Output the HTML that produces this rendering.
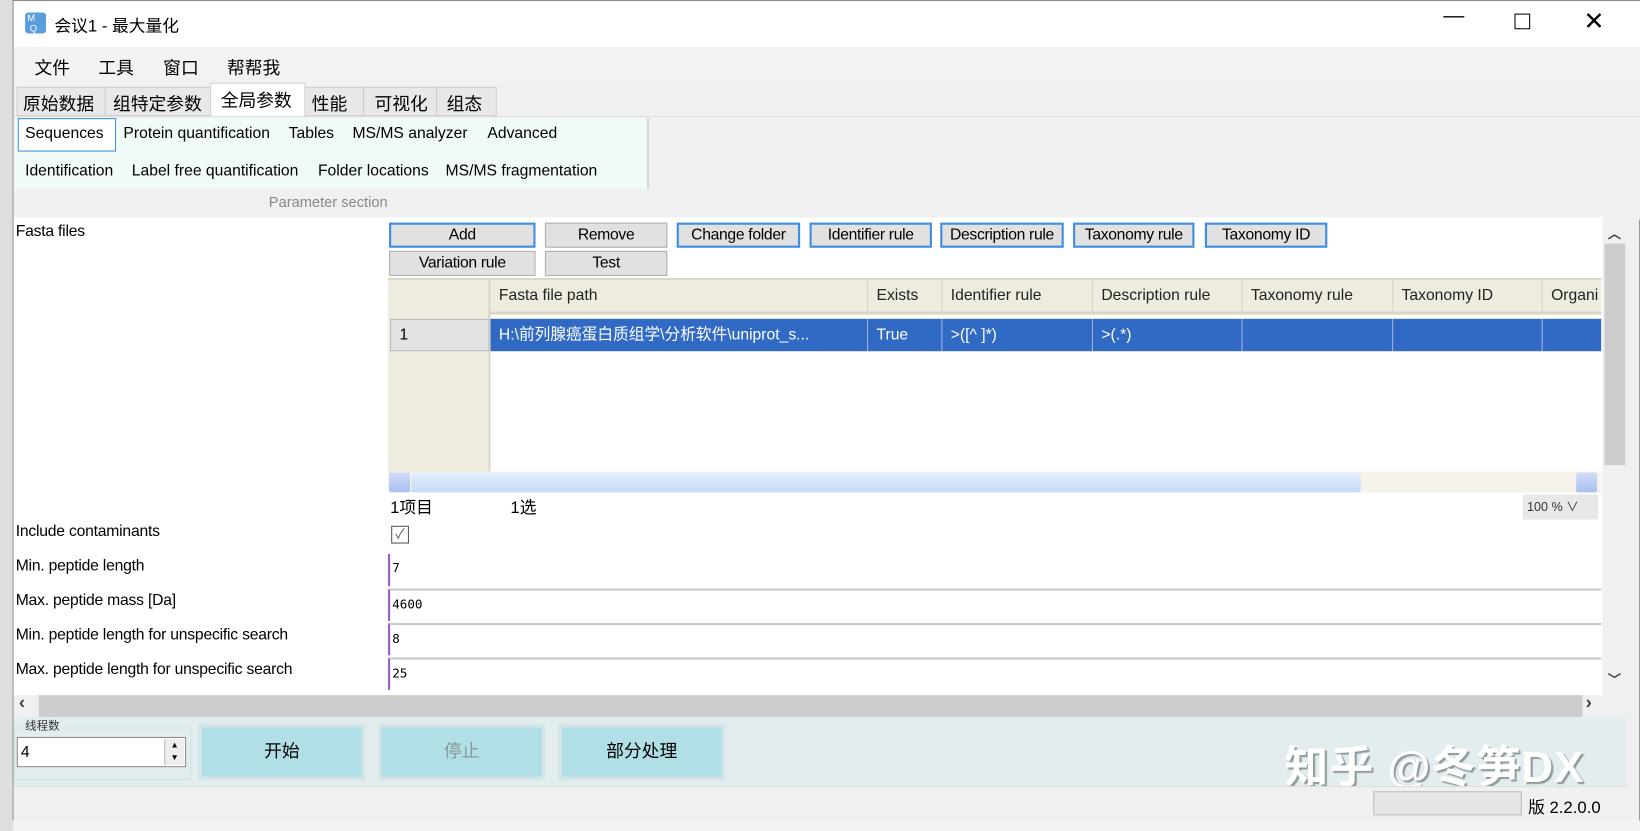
<!DOCTYPE html>
<html><head><meta charset="utf-8"><style>
*{box-sizing:border-box;margin:0;padding:0}
body{width:1640px;height:831px;overflow:hidden;background:#f3f3f3;font-family:"Liberation Sans","Noto Sans CJK SC",sans-serif;color:#000}
#w{position:absolute;left:0;top:0;width:1568px;height:795px;transform:scale(1.04592,1.04528);transform-origin:0 0;background:#ececec}
.a{position:absolute;white-space:nowrap}
.btn{position:absolute;height:24px;background:#e1e1e1;border:1px solid #adadad;font-size:15px;text-align:center;line-height:22px;letter-spacing:-0.3px}
.bb{border:2px solid #3d8ee0;line-height:20px}
.hd{position:absolute;top:0;height:31px;border-right:1px solid #d8d5c4;font-size:15px;line-height:30px;padding-left:8px;color:#222}
.cl{position:absolute;top:0;height:31px;border-right:1px solid #9fb5dd;color:#fff;font-size:15px;line-height:31px;padding-left:8px}
.lab{position:absolute;left:15px;font-size:15px;letter-spacing:-0.2px}
.in{position:absolute;left:371px;width:1160px;height:31px;border-top:2px solid #c8c8c8;border-left:2px solid #9b59d0;font-family:"DejaVu Sans Mono","Liberation Mono",monospace;font-size:12px;padding:6px 0 0 2px}
.gb{position:absolute;top:693px;height:53px;width:159px;background:#b0dfe5;border:3px solid #d3e3e6;font-size:17px;text-align:center;line-height:46px}
</style></head><body><div id="w">
<div class="a" style="left:0;top:0;width:12px;height:795px;background:#dedede"></div>
<div class="a" style="left:12px;top:0;width:1556px;height:785px;background:#fff;border-left:1px solid #8a8a8a;border-top:1px solid #8a8a8a"></div>
<div class="a" style="left:24px;top:12px;width:20px;height:20px;background:#5a9ee0;border-radius:3px;color:#fff;font-size:9px;line-height:10px;padding-left:2px">M<br>&nbsp;Q</div>
<div class="a" style="left:52px;top:11px;font-size:16px">会议1 - 最大量化</div>
<div class="a" style="left:1380px;top:4px;font-size:20px">—</div>
<div class="a" style="left:1448px;top:13px;width:15px;height:15px;border:1.5px solid #000"></div>
<div class="a" style="left:1514px;top:6px;font-size:24px;font-weight:300">✕</div>
<div class="a" style="left:13px;top:45px;width:1555px;height:35px;background:#f2f2f2"></div>
<div class="a" style="left:33px;top:51px;font-size:17px">文件</div>
<div class="a" style="left:94px;top:51px;font-size:17px">工具</div>
<div class="a" style="left:156px;top:51px;font-size:17px">窗口</div>
<div class="a" style="left:217px;top:51px;font-size:17px">帮帮我</div>
<div class="a" style="left:13px;top:80px;width:1555px;height:130px;background:#f0f0f0"></div>
<div class="a" style="left:16px;top:83px;width:459px;height:28px;background:#e8e8e8;border:1px solid #d0d0d0"></div>
<div class="a" style="left:22px;top:85px;font-size:17px">原始数据</div>
<div class="a" style="left:100px;top:83px;height:28px;border-left:1px solid #ccc"></div>
<div class="a" style="left:108px;top:85px;font-size:17px">组特定参数</div>
<div class="a" style="left:201px;top:79px;width:91px;height:33px;background:#fff;border:1px solid #d0d0d0;border-bottom:none"></div>
<div class="a" style="left:211px;top:82px;font-size:17px">全局参数</div>
<div class="a" style="left:298px;top:85px;font-size:17px">性能</div>
<div class="a" style="left:347px;top:83px;height:28px;border-left:1px solid #ccc"></div>
<div class="a" style="left:358px;top:85px;font-size:17px">可视化</div>
<div class="a" style="left:417px;top:83px;height:28px;border-left:1px solid #ccc"></div>
<div class="a" style="left:427px;top:85px;font-size:17px">组态</div>
<div class="a" style="left:13px;top:111px;width:1555px;height:97px;background:#f0f0f0;border-top:1px solid #e0e0e0"></div>
<div class="a" style="left:14px;top:113px;width:606px;height:68px;background:#f0faf6;border-right:1px solid #bbb"></div>
<div class="a" style="left:17px;top:113px;width:94px;height:32px;border:1.5px solid #3d8ee0;background:#fff"></div>
<div class="a" style="left:24px;top:119px;font-size:15px">Sequences</div>
<div class="a" style="left:118px;top:119px;font-size:15px">Protein quantification</div>
<div class="a" style="left:276px;top:119px;font-size:15px">Tables</div>
<div class="a" style="left:337px;top:119px;font-size:15px">MS/MS analyzer</div>
<div class="a" style="left:466px;top:119px;font-size:15px">Advanced</div>
<div class="a" style="left:24px;top:155px;font-size:15px">Identification</div>
<div class="a" style="left:126px;top:155px;font-size:15px">Label free quantification</div>
<div class="a" style="left:304px;top:155px;font-size:15px">Folder locations</div>
<div class="a" style="left:426px;top:155px;font-size:15px">MS/MS fragmentation</div>
<div class="a" style="left:257px;top:185px;font-size:14px;color:#888">Parameter section</div>
<div class="a" style="left:13px;top:208px;width:1520px;height:457px;background:#fff"></div>
<div class="lab" style="top:213px">Fasta files</div>
<div class="btn bb" style="left:372px;top:213px;width:140px">Add</div>
<div class="btn" style="left:521px;top:213px;width:117px">Remove</div>
<div class="btn bb" style="left:647px;top:213px;width:118px">Change folder</div>
<div class="btn bb" style="left:774px;top:213px;width:117px">Identifier rule</div>
<div class="btn bb" style="left:899px;top:213px;width:118px">Description rule</div>
<div class="btn bb" style="left:1026px;top:213px;width:116px">Taxonomy rule</div>
<div class="btn bb" style="left:1152px;top:213px;width:117px">Taxonomy ID</div>
<div class="btn" style="left:372px;top:240px;width:140px">Variation rule</div>
<div class="btn" style="left:521px;top:240px;width:117px">Test</div>
<div class="a" style="left:371px;top:266px;width:1160px;height:205px;background:#fff;border-top:2px solid #d8d6c8;overflow:hidden">
 <div class="a" style="left:0;top:0;width:98px;height:185px;background:#eeecdf;border-right:2px solid #d8d6c8"></div>
 <div class="a" style="left:98px;top:0;width:1062px;height:33px;background:#eeecdf;border-bottom:3px solid #d8d6c8"></div>
 <div class="hd" style="left:98px;width:361px">Fasta file path</div>
 <div class="hd" style="left:459px;width:71px">Exists</div>
 <div class="hd" style="left:530px;width:144px">Identifier rule</div>
 <div class="hd" style="left:674px;width:143px">Description rule</div>
 <div class="hd" style="left:817px;width:144px">Taxonomy rule</div>
 <div class="hd" style="left:961px;width:143px">Taxonomy ID</div>
 <div class="hd" style="left:1104px;width:80px">Organi</div>
 <div class="a" style="left:2px;top:37px;width:95px;height:31px;background:#e3e3e3;border:1px solid #bbb;font-size:15px;line-height:29px;padding-left:8px">1</div>
 <div class="a" style="left:98px;top:37px;width:1062px;height:31px;background:#316ac5"></div>
 <div class="cl" style="left:98px;top:37px;width:361px">H:\前列腺癌蛋白质组学\分析软件\uniprot_s...</div>
 <div class="cl" style="left:459px;top:37px;width:71px">True</div>
 <div class="cl" style="left:530px;top:37px;width:144px">&gt;([^ ]*)</div>
 <div class="cl" style="left:674px;top:37px;width:143px">&gt;(.*)</div>
 <div class="cl" style="left:817px;top:37px;width:144px"></div>
 <div class="cl" style="left:961px;top:37px;width:143px"></div>
 <div class="a" style="left:0;top:183px;width:1160px;height:22px;background:#f5f3ea;border-bottom:2px solid #d8d6c8"></div>
 <div class="a" style="left:1px;top:184px;width:20px;height:19px;background:linear-gradient(#d0dcf8,#a8c0f0);border-radius:2px"></div>
 <div class="a" style="left:22px;top:184px;width:908px;height:19px;background:linear-gradient(#e4eefc,#c6dbf8);border-radius:2px"></div>
 <div class="a" style="left:1136px;top:184px;width:20px;height:19px;background:linear-gradient(#d0dcf8,#a8c0f0);border-radius:2px"></div>
</div>
<div class="a" style="left:373px;top:472px;font-size:16px">1项目</div>
<div class="a" style="left:488px;top:472px;font-size:16px">1选</div>
<div class="a" style="left:1456px;top:473px;width:72px;height:24px;background:#e8e8e8;font-size:12px;line-height:24px;padding-left:4px;color:#333">100 % ∨</div>
<div class="a" style="left:1532px;top:210px;width:23px;height:455px;background:#f0f0f0"></div>
<div class="a" style="left:1537px;top:213px;font-size:13px;font-weight:bold;color:#444">︿</div>
<div class="a" style="left:1534px;top:233px;width:20px;height:212px;background:#cdcdcd"></div>
<div class="a" style="left:1537px;top:640px;font-size:13px;font-weight:bold;color:#444">﹀</div>
<div class="lab" style="top:500px">Include contaminants</div>
<div class="a" style="left:374px;top:503px;width:17px;height:17px;border:1px solid #555;font-size:13px;line-height:14px;text-align:center;color:#555">✓</div>
<div class="lab" style="top:533px">Min. peptide length</div>
<div class="in" style="top:530px;border-top:none">7</div>
<div class="lab" style="top:566px">Max. peptide mass [Da]</div>
<div class="in" style="top:563px">4600</div>
<div class="lab" style="top:599px">Min. peptide length for unspecific search</div>
<div class="in" style="top:596px">8</div>
<div class="lab" style="top:632px">Max. peptide length for unspecific search</div>
<div class="in" style="top:629px">25</div>
<div class="a" style="left:13px;top:665px;width:1542px;height:21px;background:#f0f0f0"></div>
<div class="a" style="left:37px;top:665px;width:1476px;height:21px;background:#cdcdcd"></div>
<div class="a" style="left:18px;top:662px;font-size:18px;font-weight:bold;color:#444">‹</div>
<div class="a" style="left:1516px;top:662px;font-size:18px;font-weight:bold;color:#444">›</div>
<div class="a" style="left:13px;top:686px;width:1555px;height:66px;background:#e3edef"></div>
<div class="a" style="left:13px;top:696px;width:170px;height:50px;border:1px solid #d5dfe1"></div>
<div class="a" style="left:24px;top:686px;font-size:11px;color:#333">线程数</div>
<div class="a" style="left:16px;top:705px;width:162px;height:29px;background:#fff;border:1px solid #888;font-size:15px;line-height:27px;padding-left:3px">4</div>
<div class="a" style="left:157px;top:707px;width:19px;height:25px;background:#eee;border-left:1px solid #bbb;font-size:8px;line-height:12px;text-align:center">▲<br>▼</div>
<div class="gb" style="left:190px">开始</div>
<div class="gb" style="left:362px;color:#8a9a9c">停止</div>
<div class="gb" style="left:534px">部分处理</div>
<div class="a" style="left:1228px;top:700px;font-size:42px;font-weight:bold;color:#fff;text-shadow:2px 2px 1px #8f9a9c;letter-spacing:1px">知乎 @冬笋DX</div>
<div class="a" style="left:13px;top:752px;width:1555px;height:33px;background:#f0f0f0;border-top:1px solid #ddd"></div>
<div class="a" style="left:1313px;top:757px;width:142px;height:23px;background:#e6e6e6;border:1px solid #bcbcbc"></div>
<div class="a" style="left:1461px;top:759px;font-size:16px">版 2.2.0.0</div>
<div class="a" style="left:13px;top:785px;width:1555px;height:10px;background:#f3f3f3"></div>
<div class="a" style="left:1555px;top:210px;width:13px;height:575px;background:#f0f0f0;border-right:1px solid #999"></div>
</div></body></html>
